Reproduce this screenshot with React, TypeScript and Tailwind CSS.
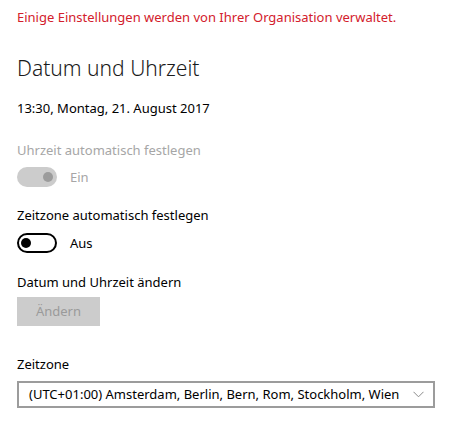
import React from "react";

export default function App() {
  const font = { fontFamily: '"Noto Sans", "Open Sans", sans-serif' };
  return (
    <div className="w-[474px] h-[426px] bg-white overflow-hidden pl-[17px] flex flex-col text-black" style={font}>
      <div className="mt-[7px] h-[20px] leading-[20px] text-[13px] text-[#d3202c] whitespace-nowrap">
        Einige Einstellungen werden von Ihrer Organisation verwaltet.
      </div>
      <div className="mt-[25px] h-[32px] leading-[32px] text-[21px] font-light text-[#1a1a1a] whitespace-nowrap">
        Datum und Uhrzeit
      </div>
      <div className="mt-[14px] h-[20px] leading-[20px] text-[13px]">13:30, Montag, 21. August 2017</div>
      <div className="mt-[22px] h-[20px] leading-[20px] text-[13px] text-[#a6a6a6]">Uhrzeit automatisch festlegen</div>
      <div className="mt-[7px] h-[20px] flex items-center gap-[13px]">
        <div className="w-[40px] h-[20px] rounded-full bg-[#cccccc] flex items-center justify-end pr-[4px]">
          <div className="w-[10px] h-[10px] rounded-full bg-[#9c9c9c]" />
        </div>
        <span className="text-[13px] leading-[20px] text-[#a6a6a6]">Ein</span>
      </div>
      <div className="mt-[18px] h-[20px] leading-[20px] text-[13px]">Zeitzone automatisch festlegen</div>
      <div className="mt-[8px] h-[20px] flex items-center gap-[13px]">
        <div className="w-[40px] h-[20px] rounded-full border-2 border-black flex items-center pl-[2px]">
          <div className="w-[10px] h-[10px] rounded-full bg-black" />
        </div>
        <span className="text-[13px] leading-[20px]">Aus</span>
      </div>
      <div className="mt-[19px] h-[20px] leading-[20px] text-[13px]">Datum und Uhrzeit ändern</div>
      <div className="mt-[5px] w-[83px] h-[29px] bg-[#cccccc] flex items-center justify-center text-[13px] text-[#9a9a9a]">
        Ändern
      </div>
      <div className="mt-[28px] h-[20px] leading-[20px] text-[13px]">Zeitzone</div>
      <div className="mt-[7px] w-[418px] h-[27px] border-2 border-[#9c9c9c] flex items-center pl-[10px] pr-[9px] text-[13px]">
        <span className="flex-1 whitespace-nowrap">(UTC+01:00) Amsterdam, Berlin, Bern, Rom, Stockholm, Wien</span>
        <svg width="11" height="7" viewBox="0 0 11 7" fill="none">
          <path d="M0.5 0.8 L5.5 5.8 L10.5 0.8" stroke="#8a8a8a" strokeWidth="1" />
        </svg>
      </div>
    </div>
  );
}
